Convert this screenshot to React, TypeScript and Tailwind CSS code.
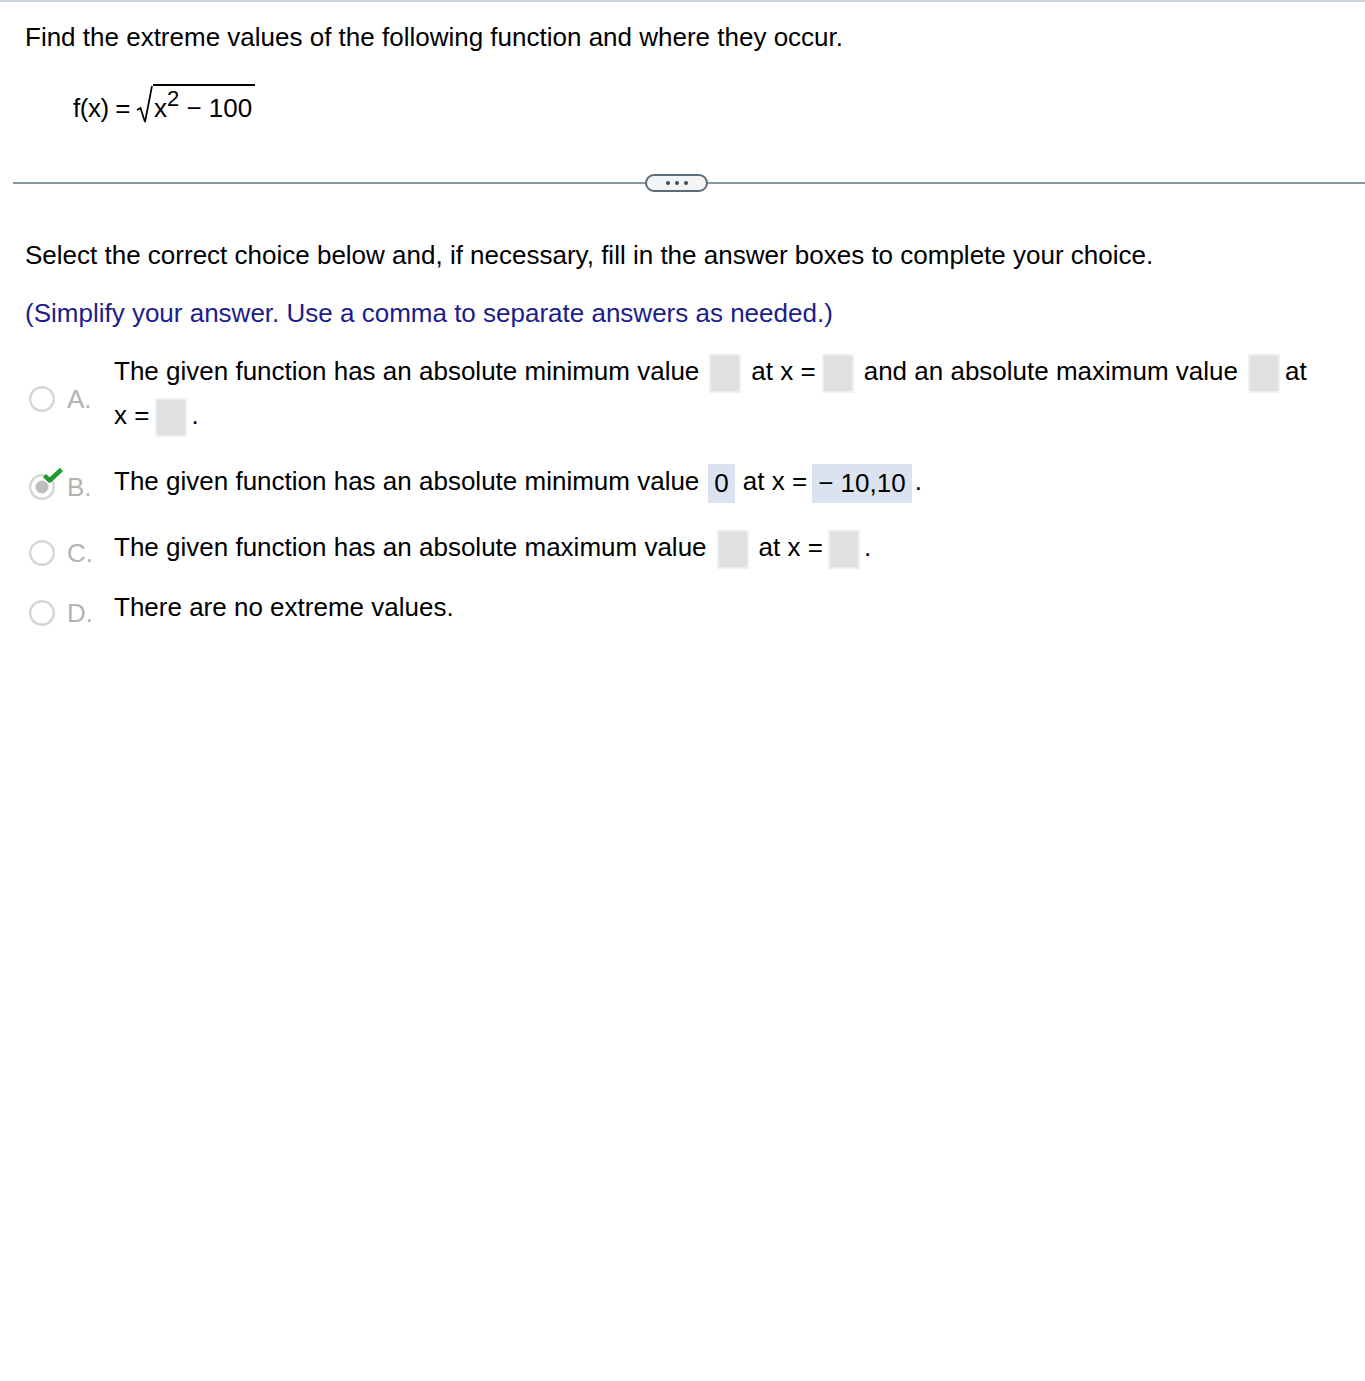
import { ReactNode } from 'react';

const font = { fontFamily: '"Liberation Sans", Arial, sans-serif' };

function Box({ value }: { value?: string }) {
  if (value) {
    return (
      <span className="inline-flex h-[39px] items-center bg-[#dbe3f0] px-[6px] align-middle leading-none">
        {value}
      </span>
    );
  }
  return (
    <span className="inline-block h-[39px] w-[32px] border-2 border-[#edf0f5] bg-[#e0e0e0] align-middle" />
  );
}

function Radio({ checked }: { checked?: boolean }) {
  return (
    <span className="relative inline-block h-[28px] w-[28px]">
      <svg width="28" height="28" viewBox="0 0 28 28">
        <circle cx="14" cy="14" r="11.8" fill="white" stroke="#d6d6d6" strokeWidth="2.4" />
        {checked && <circle cx="14" cy="14" r="6.5" fill="#bdbdbd" />}
      </svg>
      {checked && (
        <svg className="absolute left-[14px] top-[-6px]" width="22" height="17" viewBox="0 0 22 17">
          <path d="M2.5 8.5 L7.5 13.5 L19.5 2.5" fill="none" stroke="#1f9a2e" strokeWidth="4.5" strokeLinejoin="round" />
        </svg>
      )}
    </span>
  );
}

function Option({ letter, checked, children }: { letter: string; checked?: boolean; children: ReactNode }) {
  return (
    <div className="flex items-center">
      <div className="mt-[12px] flex w-[114px] items-center pl-[28px]">
        <Radio checked={checked} />
        <span className="ml-[11px] text-[26px] leading-[30px] text-[#b3b3b3]">{letter}</span>
      </div>
      <div className="flex-1">{children}</div>
    </div>
  );
}

export default function App() {
  return (
    <div className="min-h-[1381px] w-full border-t-2 border-[#c9d1dc] bg-white text-[26px] text-black" style={font}>
      <div className="px-[25px] pt-[20px]">
        <p className="leading-[30px]">Find the extreme values of the following function and where they occur.</p>

        <div className="mt-[32px] flex items-end pl-[48px] leading-[30px]">
          <span className="tracking-[-0.5px]">f(x) =</span>
          <span className="ml-[6px] flex items-end">
            <svg width="17" height="38" viewBox="0 0 17 38">
              <path d="M1 25 L4.5 23 L9 37 L16 1" fill="none" stroke="#000" strokeWidth="1.7" />
            </svg>
            <span className="border-t-2 border-black pl-[1px] pr-[3px] pt-[7px]">
              x<sup className="relative top-[-11px] text-[22px]">2</sup> − 100
            </span>
          </span>
        </div>
      </div>

      <div className="relative ml-[13px] mt-[51px] h-[20px]">
        <div className="absolute left-0 right-0 top-[8px] h-[2px] bg-[#8a96a2]" />
        <div className="absolute left-[632px] top-0 flex h-[18px] w-[63px] items-center justify-center gap-[5px] rounded-full border-2 border-[#5c6b7a] bg-[#f3f4f6]">
          <span className="h-[4px] w-[4px] rounded-full bg-[#3f4a55]" />
          <span className="h-[4px] w-[4px] rounded-full bg-[#3f4a55]" />
          <span className="h-[4px] w-[4px] rounded-full bg-[#3f4a55]" />
        </div>
      </div>

      <div className="px-[25px]">
        <p className="mt-[46px] leading-[30px]">
          Select the correct choice below and, if necessary, fill in the answer boxes to complete your choice.
        </p>
        <p className="mt-[28px] leading-[30px] text-[#1c1c8c]">
          (Simplify your answer. Use a comma to separate answers as needed.)
        </p>
      </div>

      <div className="mt-[21px]">
        <Option letter="A.">
          <div className="whitespace-nowrap leading-[44px]">
            <span>The given function has an absolute minimum value</span>
            <span className="ml-[10px] mr-[10px]"><Box /></span>
            <span>at x =</span>
            <span className="ml-[6px] mr-[10px]"><Box /></span>
            <span>and an absolute maximum value</span>
            <span className="ml-[10px] mr-[5px]"><Box /></span>
            <span>at</span>
            <br />
            <span>x =</span>
            <span className="ml-[6px] mr-[4px]"><Box /></span>
            <span>.</span>
          </div>
        </Option>

        <div className="mt-[22px]">
          <Option letter="B." checked>
            <div className="leading-[44px]">
              <span>The given function has an absolute minimum value</span>
              <span className="ml-[9px] mr-[8px]"><Box value="0" /></span>
              <span>at x =</span>
              <span className="ml-[5px] mr-[3px]"><Box value="− 10,10" /></span>
              <span>.</span>
            </div>
          </Option>
        </div>

        <div className="mt-[22px]">
          <Option letter="C.">
            <div className="leading-[44px]">
              <span>The given function has an absolute maximum value</span>
              <span className="ml-[10px] mr-[10px]"><Box /></span>
              <span>at x =</span>
              <span className="ml-[5px] mr-[4px]"><Box /></span>
              <span>.</span>
            </div>
          </Option>
        </div>

        <div className="mt-[16px]">
          <Option letter="D.">
            <div className="leading-[44px]">There are no extreme values.</div>
          </Option>
        </div>
      </div>
    </div>
  );
}
